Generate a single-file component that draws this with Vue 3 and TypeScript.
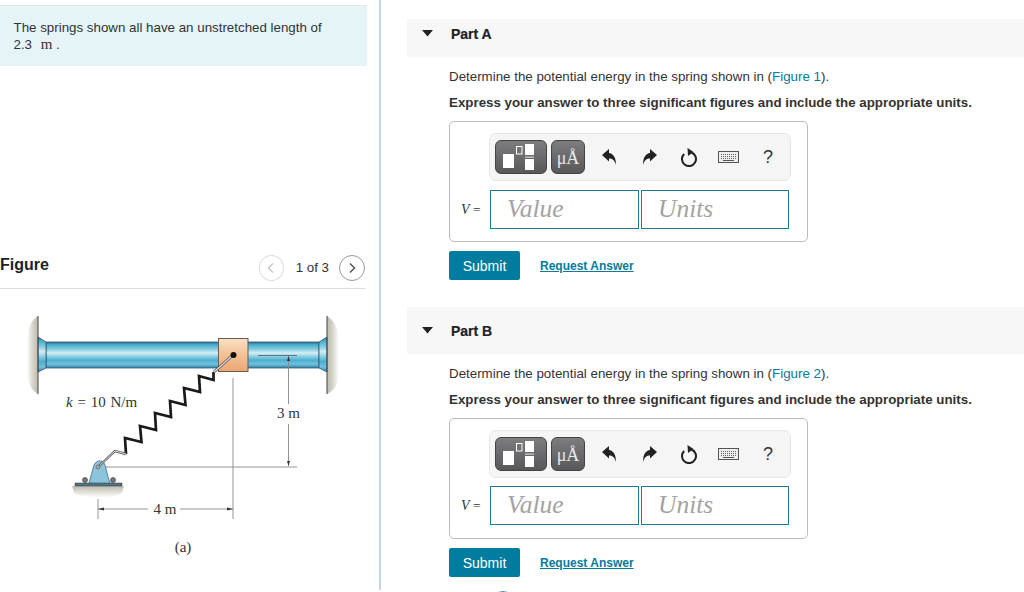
<script setup lang="ts">
interface Part {
  name: string
  figure: number
}
const parts: Part[] = [
  { name: 'Part A', figure: 1 },
  { name: 'Part B', figure: 2 },
]
const springPts = [
  [213.5, 373], [213.5, 381], [199, 377], [200, 393], [184, 389], [185.5, 406], [170, 402], [171, 418],
  [155, 414], [156, 431], [140, 427], [141.5, 443], [125, 439], [126, 455],
]
  .map((p) => p.join(','))
  .join(' ')
</script>

<template>
  <div class="page">
    <aside class="left">
      <div class="note">
        The springs shown all have an unstretched length of<br />2.3 <span class="unit">m</span> .
      </div>
      <div class="figure-head">
        <strong class="figure-title">Figure</strong>
        <div class="pager">
          <span class="round off">
            <svg width="10" height="12" viewBox="0 0 10 12"><path d="M7 1.500 2.500 6 7 10.500" fill="none" stroke="#c4c9cc" stroke-width="1.500" /></svg>
          </span>
          <span class="count">1 of 3</span>
          <span class="round">
            <svg width="10" height="12" viewBox="0 0 10 12"><path d="M3 1.500 7.500 6 3 10.500" fill="none" stroke="#555" stroke-width="1.500" /></svg>
          </span>
        </div>
      </div>
      <svg class="diagram" width="366" height="290" viewBox="0 300 366 290">
        <defs>
          <linearGradient id="rod" x1="0" y1="0" x2="0" y2="1">
            <stop offset="0" stop-color="#2a6f8f" />
            <stop offset=".1" stop-color="#45abcc" />
            <stop offset=".3" stop-color="#8fd0e2" />
            <stop offset=".42" stop-color="#d5eef4" />
            <stop offset=".55" stop-color="#8fd0e2" />
            <stop offset=".7" stop-color="#4aaed0" />
            <stop offset=".85" stop-color="#74c0da" />
            <stop offset="1" stop-color="#2e86a8" />
          </linearGradient>
          <linearGradient id="collar" x1="0" y1="0" x2="0" y2="1">
            <stop offset="0" stop-color="#f8e0c8" />
            <stop offset=".5" stop-color="#f5c094" />
            <stop offset="1" stop-color="#eca674" />
          </linearGradient>
          <linearGradient id="wallL" x1="0" y1="0" x2="1" y2="0">
            <stop offset="0" stop-color="#fff" />
            <stop offset=".5" stop-color="#d8d6cc" />
            <stop offset="1" stop-color="#bdbbb0" />
          </linearGradient>
          <linearGradient id="wallR" x1="1" y1="0" x2="0" y2="0">
            <stop offset="0" stop-color="#fff" />
            <stop offset=".5" stop-color="#d8d6cc" />
            <stop offset="1" stop-color="#bdbbb0" />
          </linearGradient>
          <linearGradient id="ground" x1="0" y1="0" x2="0" y2="1">
            <stop offset="0" stop-color="#bdbbae" />
            <stop offset="1" stop-color="#fff" />
          </linearGradient>
        </defs>
        <g class="soft">
          <path d="M38 317 C30 322 27 330 27 345 V375 C28 387 33 392 38 395 Z" fill="url(#wallL)" />
          <path d="M327 317 C335 322 339 330 339 345 V375 C338 387 333 392 327 395 Z" fill="url(#wallR)" />
          <rect x="46" y="343" width="273" height="26" fill="url(#rod)" stroke="#35566a" stroke-width=".8" />
          <path d="M38 338 46 343 V369 L38 373 Z" fill="url(#rod)" stroke="#35566a" stroke-width=".8" />
          <path d="M327 338 319 343 V369 L327 373 Z" fill="url(#rod)" stroke="#35566a" stroke-width=".8" />
          <path d="M38 317 V395 M327 317 V395" stroke="#444" stroke-width="1" />
          <rect x="218.500" y="339.500" width="29.500" height="33" fill="url(#collar)" stroke="#6d5a48" stroke-width="1" />
          <path d="M258 356.500H297" stroke="#4a5a60" stroke-width=".8" fill="none" />

          <path d="M105 468H297M233 379V520M288.500 357V405M288.500 425V467M98 500V520M98 510H148M180 510H233" stroke="#888" stroke-width=".9" fill="none" />
          <path d="M288.500 357l-1.500 5h3zM288.500 467l-1.500-5h3zM98 510l6-1.500v3zM233 510l-6-1.500v3z" fill="#333" />

          <path d="M72 487H124L122 494C112 500 85 500 74 494Z" fill="url(#ground)" />
          <path d="M75 484H122V487H75Z" fill="#4f7486" stroke="#333" stroke-width=".5" />
          <circle cx="85" cy="481" r="2.500" fill="#777" stroke="#333" stroke-width=".6" />
          <circle cx="113" cy="481" r="2.500" fill="#777" stroke="#333" stroke-width=".6" />
          <path d="M89 484 94 466C96 461 102 461 104 464 106 467 107 476 110 484Z" fill="#8cc3dd" stroke="#46687a" stroke-width=".8" />
          <polyline :points="springPts" fill="none" stroke="#1a1a1a" stroke-width="2.700" stroke-linejoin="miter" />
          <polyline points="126,455 115,452 98,468" fill="none" stroke="#555" stroke-width="2.400" />
          <polyline points="126,455 115,452 98,468" fill="none" stroke="#ddd" stroke-width="1" />
          <path d="M214 373 233 356" stroke="#555" stroke-width="2.800" fill="none" />
          <path d="M214 373 233 356" stroke="#ddd" stroke-width="1.200" fill="none" />
          <circle cx="233.500" cy="356" r="3" fill="#111" />
          <circle cx="98" cy="468" r="2" fill="#aaa" stroke="#555" stroke-width=".6" />
        </g>
        <text x="66" y="408" class="fig wide-words"><tspan font-style="italic">k</tspan> = 10 N/m</text>
        <text x="288.500" y="419" class="fig mid">3 m</text>
        <text x="165" y="514.500" class="fig mid">4 m</text>
        <text x="183" y="553" class="fig mid">(a)</text>
      </svg>
    </aside>

    <main class="right">
      <section v-for="part in parts" :key="part.name" class="part">
        <header class="part-head">
          <svg class="caret" width="11" height="7" viewBox="0 0 11 7"><path d="M0 0H11L5.500 6.500Z" fill="#222" /></svg>
          <span class="part-name">{{ part.name }}</span>
        </header>
        <div class="part-body">
          <p class="question">Determine the potential energy in the spring shown in (<span class="link">Figure {{ part.figure }}</span>).</p>
          <p class="instruct">Express your answer to three significant figures and include the appropriate units.</p>
          <div class="answer">
            <div class="toolbar">
              <button class="tool wide" type="button">
                <svg width="50" height="32" viewBox="1 1 50 32">
                  <rect x="8" y="14" width="11" height="14" fill="#fff" />
                  <rect x="21.500" y="6.500" width="5.500" height="7.500" fill="none" stroke="#fff" stroke-width="1" />
                  <rect x="30" y="4" width="9" height="11" fill="#fff" />
                  <rect x="30" y="16.500" width="9" height="1.300" fill="#ccc" />
                  <rect x="30" y="19" width="9" height="11" fill="#fff" />
                </svg>
              </button>
              <button class="tool narrow" type="button"><span class="mu">μÅ</span></button>
              <div class="actions">
                <svg class="undo" width="14" height="16" viewBox="0 0 14 16"><path d="M0 6 7 0V4C11 4.500 14 8 14 16 12.500 11 10.500 9.500 7 9.500V12.500Z" fill="#222" /></svg>
                <svg class="redo" width="14" height="16" viewBox="0 0 14 16"><path d="M14 6 7 0V4C3 4.500 0 8 0 16 1.500 11 3.500 9.500 7 9.500V12.500Z" fill="#222" /></svg>
                <svg class="refresh" width="16" height="19" viewBox="0 0 16 19"><path d="M10.500 4.500A7 7 0 1 1 3.200 5.900" fill="none" stroke="#222" stroke-width="2" /><path d="M6.500 0 12.500 4 7 8Z" fill="#222" /></svg>
                <svg class="keys" width="21" height="12" viewBox="0 0 21 12"><rect x=".5" y=".5" width="20" height="11" fill="#eee" stroke="#555" /><path d="M3 3.500H18M3 5.500H18M3 7.500H18" stroke="#666" stroke-dasharray="1 1" fill="none" /><path d="M5 9.500H16" stroke="#555" fill="none" /></svg>
                <span class="help">?</span>
              </div>
            </div>
            <div class="inputs">
              <span class="var"><i class="var-name">V</i> =</span>
              <div class="field value">Value</div>
              <div class="field units">Units</div>
            </div>
          </div>
          <div class="submit-row">
            <button class="submit" type="button">Submit</button>
            <a class="request">Request Answer</a>
          </div>
          <div v-if="part.figure === 2" class="peek"></div>
        </div>
      </section>
    </main>
  </div>
</template>

<style scoped>
.page {
  display: flex;
  width: 1024px;
  height: 592px;
  overflow: hidden;
  font-family: "Liberation Sans", Arial, sans-serif;
  color: #333;
  background: #fff;
}
.left {
  box-sizing: border-box;
  width: 381px;
  height: 590px;
  padding-top: 5px;
  border-right: 2px solid #c5d5e2;
  flex: none;
}
.note {
  box-sizing: border-box;
  width: 367px;
  height: 61px;
  padding: 14px 13.500px 0;
  background: #e5f5f7;
  border-top: 1px solid #dde5e8;
  font-size: 13.330px;
  line-height: 16px;
}
.unit {
  font-family: "Liberation Serif", serif;
  font-size: 15px;
  margin-left: 5px;
}
.figure-head {
  box-sizing: border-box;
  width: 365px;
  height: 44px;
  margin-top: 179px;
  border-bottom: 1px solid #ddd;
  display: flex;
  align-items: center;
  justify-content: space-between;
}
.figure-title {
  font-size: 16px;
  color: #222;
  margin-top: -4px;
}
.pager {
  display: flex;
  align-items: center;
  gap: 10px;
  margin-top: 2px;
}
.count {
  font-size: 13.330px;
  color: #333;
}
.round {
  box-sizing: border-box;
  width: 26px;
  height: 26px;
  border-radius: 50%;
  border: 1px solid #999;
  display: flex;
  align-items: center;
  justify-content: center;
}
.round.off {
  width: 25px;
  margin-right: 2px;
  border-color: #ddd;
}
.diagram {
  display: block;
  margin-top: 10px;
}
.soft {
  filter: blur(.35px);
}
.fig {
  font-family: "Liberation Serif", serif;
  font-size: 15px;
  fill: #333;
}
.wide-words {
  word-spacing: 1px;
}
.mid {
  text-anchor: middle;
}
.right {
  flex: 1;
  min-width: 0;
  padding-left: 26px;
  padding-top: 19px;
}
.part {
  height: 297px;
}
.part:first-child {
  height: 288px;
}
.part-head {
  box-sizing: border-box;
  height: 47px;
  background: #f7f7f7;
  display: flex;
  align-items: center;
  padding-left: 15px;
}
.part:first-child .part-head {
  height: 38px;
  padding-bottom: 9px;
}
.part-name {
  font-size: 14px;
  font-weight: 600;
  color: #222;
  margin-left: 18px;
  -webkit-text-stroke: .2px #222;
}
.part-body {
  padding-left: 42px;
}
.question {
  margin: 12px 0 0;
  font-size: 13.330px;
  line-height: 16px;
}
.link {
  color: #007c9e;
}
.instruct {
  margin: 10px 0 0;
  font-size: 13.330px;
  line-height: 16px;
  font-weight: 700;
}
.answer {
  box-sizing: border-box;
  width: 359px;
  height: 121px;
  margin-top: 10px;
  border: 1px solid #bbb;
  border-radius: 5px;
  padding: 11px 0 0 39px;
}
.toolbar {
  box-sizing: border-box;
  width: 302px;
  height: 48px;
  background: #f5f5f5;
  border: 1px solid #e6e6e6;
  border-radius: 7px;
  display: flex;
  align-items: center;
  padding-left: 5px;
  gap: 4px;
}
.tool {
  height: 34px;
  padding: 0;
  border: 1px solid #444;
  border-radius: 6px;
  background: linear-gradient(#7d7d7f, #58585b);
  display: flex;
  align-items: center;
  justify-content: center;
}
.wide {
  width: 52px;
}
.narrow {
  width: 34px;
}
.mu {
  font-family: "Liberation Serif", serif;
  font-size: 18px;
  color: #e8e8e8;
  margin-top: 3px;
}
.actions {
  flex: 1;
  display: flex;
  align-items: center;
  padding-left: 13px;
}
.redo {
  margin-left: 27px;
}
.refresh {
  margin-left: 24px;
}
.keys {
  margin-left: 21px;
}
.help {
  font-size: 18px;
  color: #333;
  margin-left: 24px;
}
.inputs {
  display: flex;
  align-items: center;
  gap: 2px;
  margin: 9px 0 0 -28px;
}
.part:last-child .inputs {
  margin-top: 8px;
}
.var {
  width: 27px;
  box-sizing: border-box;
  font-family: "Liberation Serif", serif;
  font-size: 13.500px;
  color: #333;
}
.var-name {
  font-size: 14px;
}
.field {
  box-sizing: border-box;
  height: 39px;
  border: 1px solid #1d7a94;
  font-family: "Liberation Serif", serif;
  font-style: italic;
  font-size: 25.500px;
  line-height: 36px;
  color: #a3a3a3;
}
.value {
  width: 149px;
  padding-left: 16px;
}
.units {
  width: 148px;
  padding-left: 16px;
}
.submit-row {
  display: flex;
  align-items: center;
  gap: 20px;
  margin-top: 9px;
}
.submit {
  width: 71px;
  height: 29px;
  padding: 0;
  border: none;
  border-radius: 2px;
  background: #007c9e;
  color: #fff;
  font-family: inherit;
  font-size: 14px;
}
.request {
  font-size: 12px;
  font-weight: 700;
  color: #007c9e;
  text-decoration: underline;
}
.peek {
  box-sizing: border-box;
  width: 24px;
  height: 24px;
  margin: 14px 0 0 42px;
  border: 1.500px solid #5a8aa0;
  border-radius: 50%;
}
</style>
